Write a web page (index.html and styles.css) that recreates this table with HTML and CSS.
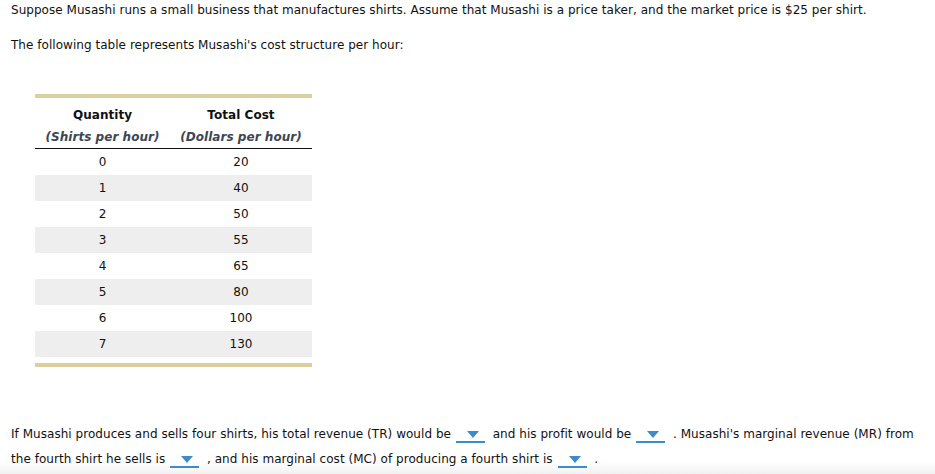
FILE: index.html
```html
<!DOCTYPE html>
<html>
<head>
<meta charset="utf-8">
<link rel="stylesheet" href="styles.css">
</head>
<body>
<div class="page">
  <p class="intro">Suppose Musashi runs a small business that manufactures shirts. Assume that Musashi is a price taker, and the market price is $25 per shirt.</p>
  <p class="intro second">The following table represents Musashi's cost structure per hour:</p>
  <div class="table-wrap">
    <table class="cost">
      <thead>
        <tr class="head"><th class="c1">Quantity</th><th class="c2">Total Cost</th></tr>
        <tr class="sub"><th class="c1">(Shirts per hour)</th><th class="c2">(Dollars per hour)</th></tr>
      </thead>
      <tbody>
        <tr><td>0</td><td>20</td></tr>
        <tr class="alt"><td>1</td><td>40</td></tr>
        <tr><td>2</td><td>50</td></tr>
        <tr class="alt"><td>3</td><td>55</td></tr>
        <tr><td>4</td><td>65</td></tr>
        <tr class="alt"><td>5</td><td>80</td></tr>
        <tr><td>6</td><td>100</td></tr>
        <tr class="alt"><td>7</td><td>130</td></tr>
      </tbody>
    </table>
  </div>
  <p class="question">If Musashi produces and sells four shirts, his total revenue (TR) would be <span class="dd"><span class="tri"></span></span> and his profit would be <span class="dd"><span class="tri"></span></span> . Musashi's marginal revenue (MR) from the fourth shirt he sells is <span class="dd"><span class="tri"></span></span> , and his marginal cost (MC) of producing a fourth shirt is <span class="dd"><span class="tri"></span></span> .</p>
</div>
</body>
</html>
```
FILE: styles.css
```css
html, body {
  margin: 0;
  padding: 0;
}
body {
  font-family: "DejaVu Sans", Verdana, sans-serif;
  font-size: 12px;
  letter-spacing: 0.04px;
  color: #111;
  background: linear-gradient(to bottom, #fff 0, #fff 462px, #f1f1f1 474px);
  min-height: 474px;
}
.page {
  padding: 3px 11px 0 11px;
}
.intro {
  margin: 0;
  line-height: 15px;
}
.second {
  margin-top: 20px;
}
.table-wrap {
  margin: 41px 0 0 24px;
  width: 277px;
  border-top: 4px solid #dccf9f;
  border-bottom: 4px solid #dccf9f;
  padding-bottom: 6px;
}
.cost {
  width: 277px;
  border-collapse: collapse;
}
.cost th, .cost td {
  padding: 0;
  text-align: center;
  line-height: 15px;
}
.c1 { width: 135px; }
.head th {
  padding-top: 10px;
  font-weight: bold;
  color: #111;
}
.sub th {
  font-style: italic;
  font-weight: bold;
  color: #3c4654;
  padding-top: 7px;
  padding-bottom: 3px;
  border-bottom: 1px solid #111;
}
.cost td {
  height: 26px;
}
.alt td {
  background: #eeeeee;
}
.question {
  margin: 55px 0 0 0;
  line-height: 25px;
}
.dd {
  display: inline-block;
  position: relative;
  width: 29px;
  height: 15px;
  border-bottom: 2px solid #3d8bcc;
  vertical-align: -5px;
  margin: 0 4px 0 1px;
}
.tri {
  position: absolute;
  left: 11px;
  top: 5px;
  width: 0;
  height: 0;
  border-left: 6px solid transparent;
  border-right: 6px solid transparent;
  border-top: 7px solid #3d8bcc;
}
```
